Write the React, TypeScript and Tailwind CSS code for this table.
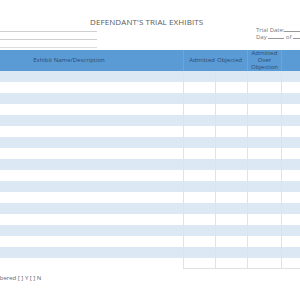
import React from 'react';

const rows = Array.from({ length: 18 }, (_, i) => i);

export default function App() {
  return (
    <div
      className="w-[300px] h-[300px] overflow-hidden bg-white text-[#555]"
      style={{ fontFamily: '"Open Sans", "Liberation Sans", sans-serif' }}
    >
      <div className="w-[330px]">
        {/* top area */}
        <div className="flex h-[50px]">
          <div className="w-[97px] pt-[31px] flex flex-col gap-[7px]">
            <div className="h-px bg-[#cfcfcf]" />
            <div className="h-px bg-[#cfcfcf]" />
            <div className="h-px bg-[#dcdcdc]" />
          </div>
          <div className="flex-1 pt-[17px]">
            <div className="text-[8px] leading-[10px] tracking-[0.1px] text-[#5a5a5a] -ml-[7px]">
              DEFENDANT'S TRIAL EXHIBITS
            </div>
          </div>
          <div className="w-[74px] pt-[27px] text-[6px] leading-[7px] text-[#777]">
            <div>Trial Date:<span className="inline-block w-[40px] border-b border-[#999]" /></div>
            <div>
              Day <span className="inline-block w-[16px] border-b border-[#999]" /> of{' '}
              <span className="inline-block w-[20px] border-b border-[#999]" />
            </div>
          </div>
        </div>

        {/* table */}
        <div className="grid grid-cols-[183px_32px_32px_34px_49px]">
          <div className="h-[21px] bg-[#5b9bd5] flex items-center justify-center pr-[45px] text-[6px] text-[#2b4a6e]">
            Exhibit Name/Description
          </div>
          <div className="h-[21px] bg-[#5b9bd5] border-l border-[#6aa6dc] flex items-center justify-end text-[6px] text-[#2b4a6e]">
            Admitted
          </div>
          <div className="h-[21px] bg-[#5b9bd5] flex items-center pl-[2px] text-[6px] text-[#2b4a6e]">
            Objected
          </div>
          <div className="h-[21px] bg-[#5b9bd5] border-l border-[#6aa6dc] flex flex-col items-center justify-center text-[6px] leading-[7px] text-[#2b4a6e]">
            <span>Admitted</span>
            <span>Over</span>
            <span>Objection</span>
          </div>
          <div className="h-[21px] bg-[#5b9bd5] border-l border-[#6aa6dc]" />

          {rows.map((i) => {
            const bg = i % 2 === 0 ? 'bg-[#dde8f5]' : 'bg-white';
            const last = i === rows.length - 1;
            return (
              <React.Fragment key={i}>
                <div className={`h-[11px] ${bg}`} />
                <div className={`h-[11px] ${bg} border-l border-[#e2e2e2] ${last ? 'border-b' : ''}`} />
                <div className={`h-[11px] ${bg} border-l border-[#e2e2e2] ${last ? 'border-b' : ''}`} />
                <div className={`h-[11px] ${bg} border-l border-[#e2e2e2] ${last ? 'border-b' : ''}`} />
                <div className={`h-[11px] ${bg} border-l border-[#e2e2e2] ${last ? 'border-b' : ''}`} />
              </React.Fragment>
            );
          })}
        </div>

        {/* footer */}
        <div className="w-[120px] h-px bg-[#ececec] -mt-[3px]" />
        <div className="mt-[7px] overflow-hidden w-[60px]">
          <div className="-ml-[14px] whitespace-nowrap text-[6px] leading-[8px] text-[#666]">
            Numbered [ ] Y [ ] N
          </div>
        </div>
      </div>
    </div>
  );
}
